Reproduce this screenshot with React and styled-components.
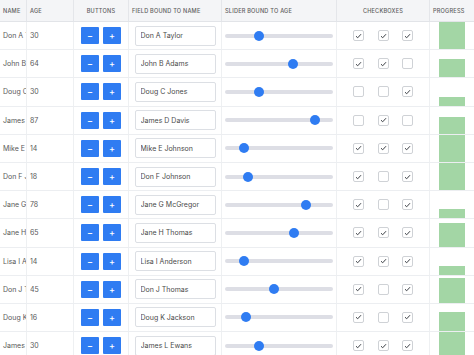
import React, { useState } from "react";
import styled, { createGlobalStyle } from "styled-components";

const GlobalStyle = createGlobalStyle`
  html, body {
    margin: 0;
    padding: 0;
    background: #fff;
    overflow: hidden;
  }
  body {
    font-family: "Inter", "Liberation Sans", sans-serif;
    -webkit-font-smoothing: antialiased;
  }
`;

const COLUMNS = "27px 47px 55px 93px 115px 93px 44px";

const Table = styled.div`
  width: 474px;
  display: flex;
  flex-direction: column;
`;

const HeaderRow = styled.div`
  display: grid;
  grid-template-columns: ${COLUMNS};
  height: 22px;
  background: #f4f5f7;
  border-bottom: 1px solid #e2e4e8;
  box-sizing: border-box;
`;

const HeaderCell = styled.div`
  display: flex;
  align-items: center;
  justify-content: ${(props) => props.align ?? "flex-start"};
  padding: 0 3px;
  border-right: ${(props) => (props.last ? "none" : "1px solid #e4e6ea")};
  font-size: 5.6px;
  font-weight: 500;
  letter-spacing: 0.2px;
  text-transform: uppercase;
  color: #5e5e5e;
  white-space: nowrap;
  overflow: hidden;
`;

const Row = styled.div`
  display: grid;
  grid-template-columns: ${COLUMNS};
  height: 28.2px;
  border-bottom: 1px solid #eceef1;
  box-sizing: border-box;
`;

const Cell = styled.div`
  display: flex;
  align-items: ${(props) => props.alignY ?? "center"};
  justify-content: ${(props) => props.align ?? "flex-start"};
  gap: ${(props) => props.gap ?? "0"};
  padding: ${(props) => props.pad ?? "0 3px"};
  border-right: ${(props) => (props.last ? "none" : "1px solid #eef0f2")};
  font-size: 7px;
  color: #585858;
  white-space: nowrap;
  overflow: hidden;
  min-width: 0;
`;

const SmallButton = styled.button`
  width: 18px;
  height: 17px;
  padding: 0;
  border: none;
  border-radius: 1px;
  background: #2f7cf2;
  color: #fff;
  font-family: "Inter", sans-serif;
  font-size: 9px;
  font-weight: 500;
  line-height: 17px;
  cursor: pointer;
`;

const Field = styled.input`
  width: 81px;
  height: 20px;
  box-sizing: border-box;
  border: 1px solid #dcdfe4;
  border-radius: 2px;
  padding: 0 5px;
  font-family: "Inter", sans-serif;
  font-size: 7px;
  color: #4a4a4a;
  outline: none;
`;

const Slider = styled.input`
  -webkit-appearance: none;
  appearance: none;
  width: 108px;
  height: 12px;
  margin: 0;
  background: transparent;

  &::-webkit-slider-runnable-track {
    height: 4px;
    border-radius: 2px;
    background: #dddee5;
  }
  &::-webkit-slider-thumb {
    -webkit-appearance: none;
    width: 10px;
    height: 10px;
    margin-top: -3px;
    border-radius: 50%;
    background: #2f7cf2;
    border: none;
  }
`;

const Box = styled.span`
  width: 11px;
  height: 11px;
  box-sizing: border-box;
  border: 1px solid #cfd2d6;
  border-radius: 2px;
  background: #fff;
  display: flex;
  align-items: center;
  justify-content: center;
  cursor: pointer;
`;

const Bar = styled.div`
  width: 26px;
  background: #a3d6a5;
`;

function Check({ checked, onToggle }) {
  return (
    <Box onClick={onToggle}>
      {checked && (
        <svg width="7" height="6" viewBox="0 0 7 6">
          <path d="M1 3.2 L2.7 4.8 L6 1.2" fill="none" stroke="#3c4046" strokeWidth="1" />
        </svg>
      )}
    </Box>
  );
}

const initialRows = [
  { name: "Don A Taylor", age: 30, checks: [1, 1, 1], progress: 100 },
  { name: "John B Adams", age: 64, checks: [1, 1, 0], progress: 68 },
  { name: "Doug C Jones", age: 30, checks: [0, 0, 1], progress: 33 },
  { name: "James D Davis", age: 87, checks: [0, 1, 0], progress: 62 },
  { name: "Mike E Johnson", age: 14, checks: [1, 1, 1], progress: 100 },
  { name: "Don F Johnson", age: 18, checks: [1, 0, 1], progress: 100 },
  { name: "Jane G McGregor", age: 78, checks: [1, 0, 1], progress: 36 },
  { name: "Jane H Thomas", age: 65, checks: [1, 1, 1], progress: 85 },
  { name: "Lisa I Anderson", age: 14, checks: [1, 1, 1], progress: 32 },
  { name: "Don J Thomas", age: 45, checks: [1, 0, 1], progress: 90 },
  { name: "Doug K Jackson", age: 16, checks: [1, 0, 1], progress: 70 },
  { name: "James L Ewans", age: 30, checks: [1, 1, 1], progress: 100 },
];

export default function App() {
  const [rows, setRows] = useState(initialRows);

  const update = (i, patch) =>
    setRows((prev) => prev.map((r, j) => (j === i ? { ...r, ...patch } : r)));

  return (
    <>
      <GlobalStyle />
      <Table>
        <HeaderRow>
          <HeaderCell>Name</HeaderCell>
          <HeaderCell>Age</HeaderCell>
          <HeaderCell align="center">Buttons</HeaderCell>
          <HeaderCell>Field bound to name</HeaderCell>
          <HeaderCell>Slider bound to age</HeaderCell>
          <HeaderCell align="center">Checkboxes</HeaderCell>
          <HeaderCell last>Progress</HeaderCell>
        </HeaderRow>
        {rows.map((row, i) => (
          <Row key={i}>
            <Cell pad="0 0 0 3px">{row.name}</Cell>
            <Cell>{row.age}</Cell>
            <Cell align="center" gap="4px">
              <SmallButton onClick={() => update(i, { age: Math.max(0, row.age - 1) })}>−</SmallButton>
              <SmallButton onClick={() => update(i, { age: Math.min(100, row.age + 1) })}>+</SmallButton>
            </Cell>
            <Cell align="center">
              <Field value={row.name} onChange={(e) => update(i, { name: e.target.value })} />
            </Cell>
            <Cell pad="0 4px 0 3px">
              <Slider
                type="range"
                min="0"
                max="100"
                value={row.age}
                onChange={(e) => update(i, { age: Number(e.target.value) })}
              />
            </Cell>
            <Cell align="center" gap="13.5px">
              {row.checks.map((c, k) => (
                <Check
                  key={k}
                  checked={!!c}
                  onToggle={() =>
                    update(i, { checks: row.checks.map((v, m) => (m === k ? 1 - v : v)) })
                  }
                />
              ))}
            </Cell>
            <Cell last align="center" alignY="flex-end" pad="0">
              <Bar style={{ height: `${row.progress}%` }} />
            </Cell>
          </Row>
        ))}
      </Table>
    </>
  );
}
